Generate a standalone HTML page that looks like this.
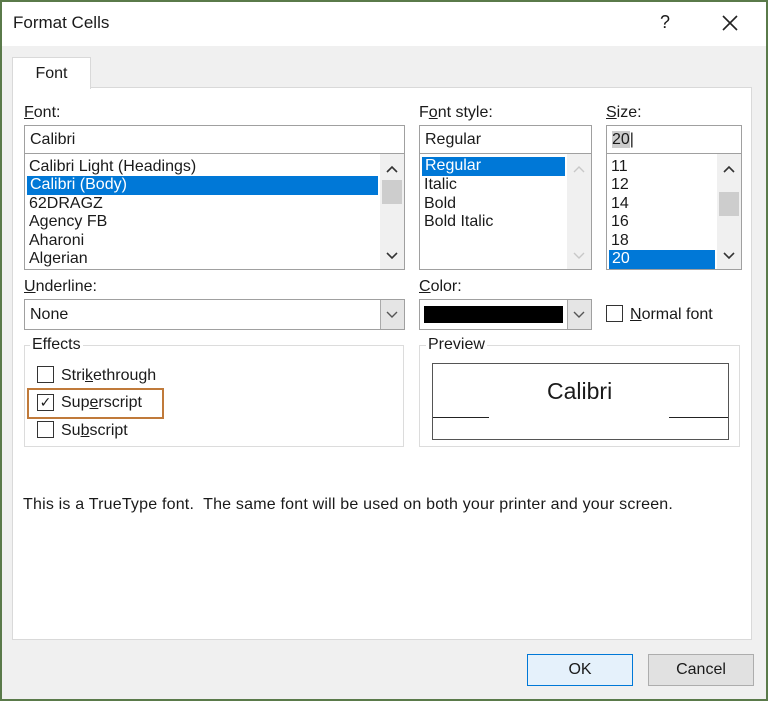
<!DOCTYPE html>
<html><head><meta charset="utf-8"><style>
*{box-sizing:border-box;margin:0;padding:0}
body{width:768px;height:701px;overflow:hidden;background:#fff;font-family:"Liberation Sans","DejaVu Sans",sans-serif;font-size:16px;color:#1a1a1a;position:relative}
.a{position:absolute}
.frame{left:0;top:0;width:768px;height:701px;border:2px solid #5a7a4a}
.gray{left:2px;top:46px;width:764px;height:653px;background:#f0f0f0}
.panel{left:12px;top:87px;width:740px;height:553px;background:#fff;border:1px solid #d9d9d9}
.tab{left:12px;top:57px;width:79px;height:32px;background:#fff;border:1px solid #d9d9d9;border-bottom:none;text-align:center;line-height:32px;font-size:16px}
.box{background:#fff;border:1px solid #a0a0a0}
.lbl{font-size:16px}
.it{position:absolute;left:4px;height:18.5px;line-height:18.5px;font-size:16px}
.sel{background:#0078d7;color:#fff}
.sb{position:absolute;right:0;top:0;width:24px;height:100%;background:#f0f0f0}
.chk{width:17px;height:17px;border:1px solid #333;background:#fff}
.grp{border:1px solid #dcdcdc}
.btn{height:32px;text-align:center;line-height:30px;font-size:16px}
u{text-decoration:underline}
svg.c{position:absolute;left:6px}
</style></head><body>
<div class="a frame"></div>
<div class="a" style="left:13px;top:13px;font-size:17px">Format Cells</div>
<div class="a" style="left:660px;top:12px;font-size:18px">?</div>
<svg class="a" style="left:722px;top:15px" width="16" height="16"><path d="M1 1L15 15M15 1L1 15" stroke="#222" stroke-width="1.6"/></svg>
<div class="a gray"></div>
<div class="a panel"></div>
<div class="a tab">Font</div>

<div class="a lbl" style="left:24px;top:104px"><u>F</u>ont:</div>
<div class="a box" style="left:24px;top:125px;width:381px;height:29px;padding:5px 5px">Calibri</div>
<div class="a box" style="left:24px;top:153px;width:381px;height:117px">
 <div class="it" style="top:4px">Calibri Light (Headings)</div>
 <div class="it sel" style="top:22px;left:2px;width:351px;padding-left:3px">Calibri (Body)</div>
 <div class="it" style="top:41px">62DRAGZ</div>
 <div class="it" style="top:59px">Agency FB</div>
 <div class="it" style="top:78px">Aharoni</div>
 <div class="it" style="top:96px">Algerian</div>
 <div class="sb"><svg class="c" style="top:11px" width="12" height="8"><path d="M1 7L6 2L11 7" fill="none" stroke="#333" stroke-width="1.6"/></svg><div class="a" style="left:2px;top:26px;width:20px;height:24px;background:#cdcdcd"></div><svg class="c" style="top:98px" width="12" height="8"><path d="M1 1L6 6L11 1" fill="none" stroke="#333" stroke-width="1.6"/></svg></div>
</div>

<div class="a lbl" style="left:419px;top:104px">F<u>o</u>nt style:</div>
<div class="a box" style="left:419px;top:125px;width:173px;height:29px;padding:5px 5px">Regular</div>
<div class="a box" style="left:419px;top:153px;width:173px;height:117px">
 <div class="it sel" style="top:3px;left:2px;width:143px;padding-left:3px">Regular</div>
 <div class="it" style="top:22px">Italic</div>
 <div class="it" style="top:41px">Bold</div>
 <div class="it" style="top:59px">Bold Italic</div>
 <div class="sb"><svg class="c" style="top:11px" width="12" height="8"><path d="M1 7L6 2L11 7" fill="none" stroke="#c8c8c8" stroke-width="1.4"/></svg><svg class="c" style="top:98px" width="12" height="8"><path d="M1 1L6 6L11 1" fill="none" stroke="#c8c8c8" stroke-width="1.4"/></svg></div>
</div>

<div class="a lbl" style="left:606px;top:104px"><u>S</u>ize:</div>
<div class="a box" style="left:606px;top:125px;width:136px;height:29px;padding:5px 5px"><span style="background:#ccc">20</span>|</div>
<div class="a box" style="left:606px;top:153px;width:136px;height:117px">
 <div class="it" style="top:4px">11</div>
 <div class="it" style="top:22px">12</div>
 <div class="it" style="top:41px">14</div>
 <div class="it" style="top:59px">16</div>
 <div class="it" style="top:78px">18</div>
 <div class="it sel" style="top:96px;left:2px;width:106px;padding-left:3px">20</div>
 <div class="sb"><svg class="c" style="top:11px" width="12" height="8"><path d="M1 7L6 2L11 7" fill="none" stroke="#333" stroke-width="1.6"/></svg><div class="a" style="left:2px;top:38px;width:20px;height:24px;background:#cdcdcd"></div><svg class="c" style="top:98px" width="12" height="8"><path d="M1 1L6 6L11 1" fill="none" stroke="#333" stroke-width="1.6"/></svg></div>
</div>

<div class="a lbl" style="left:24px;top:278px"><u>U</u>nderline:</div>
<div class="a box" style="left:24px;top:299px;width:381px;height:31px;padding:6px 5px">None
 <div class="a" style="right:0;top:0;width:24px;height:29px;background:#e5e5e5;border-left:1px solid #aaa"><svg class="c" style="top:11px;left:5px" width="12" height="8"><path d="M1 1L6 6L11 1" fill="none" stroke="#555" stroke-width="1.4"/></svg></div></div>

<div class="a lbl" style="left:419px;top:278px"><u>C</u>olor:</div>
<div class="a box" style="left:419px;top:299px;width:173px;height:31px">
 <div class="a" style="left:4px;top:6px;width:139px;height:17px;background:#000"></div>
 <div class="a" style="right:0;top:0;width:24px;height:29px;background:#e5e5e5;border-left:1px solid #aaa"><svg class="c" style="top:11px;left:5px" width="12" height="8"><path d="M1 1L6 6L11 1" fill="none" stroke="#555" stroke-width="1.4"/></svg></div></div>
<div class="a chk" style="left:606px;top:305px"></div>
<div class="a lbl" style="left:630px;top:306px"><u>N</u>ormal font</div>

<div class="a grp" style="left:24px;top:345px;width:380px;height:102px"></div>
<div class="a lbl" style="left:30px;top:336px;background:#fff;padding:0 2px">Effects</div>
<div class="a chk" style="left:37px;top:366px"></div>
<div class="a lbl" style="left:61px;top:367px">Stri<u>k</u>ethrough</div>
<div class="a" style="left:27px;top:388px;width:137px;height:31px;border:2px solid #c07a3a"></div>
<div class="a chk" style="left:37px;top:394px;font-size:14px;line-height:14px;text-align:center">&#10003;</div>
<div class="a lbl" style="left:61px;top:394px">Sup<u>e</u>rscript</div>
<div class="a chk" style="left:37px;top:421px"></div>
<div class="a lbl" style="left:61px;top:422px">Su<u>b</u>script</div>

<div class="a grp" style="left:419px;top:345px;width:321px;height:102px"></div>
<div class="a lbl" style="left:426px;top:336px;background:#fff;padding:0 2px">Preview</div>
<div class="a" style="left:432px;top:363px;width:297px;height:77px;border:1px solid #555"></div>
<div class="a" style="left:547px;top:378px;font-size:23px">Calibri</div>
<div class="a" style="left:433px;top:417px;width:56px;height:1px;background:#222"></div>
<div class="a" style="left:669px;top:417px;width:59px;height:1px;background:#222"></div>

<div class="a lbl" style="left:23px;top:496px;white-space:nowrap;letter-spacing:0.2px">This is a TrueType font.&nbsp; The same font will be used on both your printer and your screen.</div>

<div class="a btn" style="left:527px;top:654px;width:106px;background:#e5f1fb;border:1px solid #0078d7">OK</div>
<div class="a btn" style="left:648px;top:654px;width:106px;background:#e1e1e1;border:1px solid #adadad">Cancel</div>
</body></html>
